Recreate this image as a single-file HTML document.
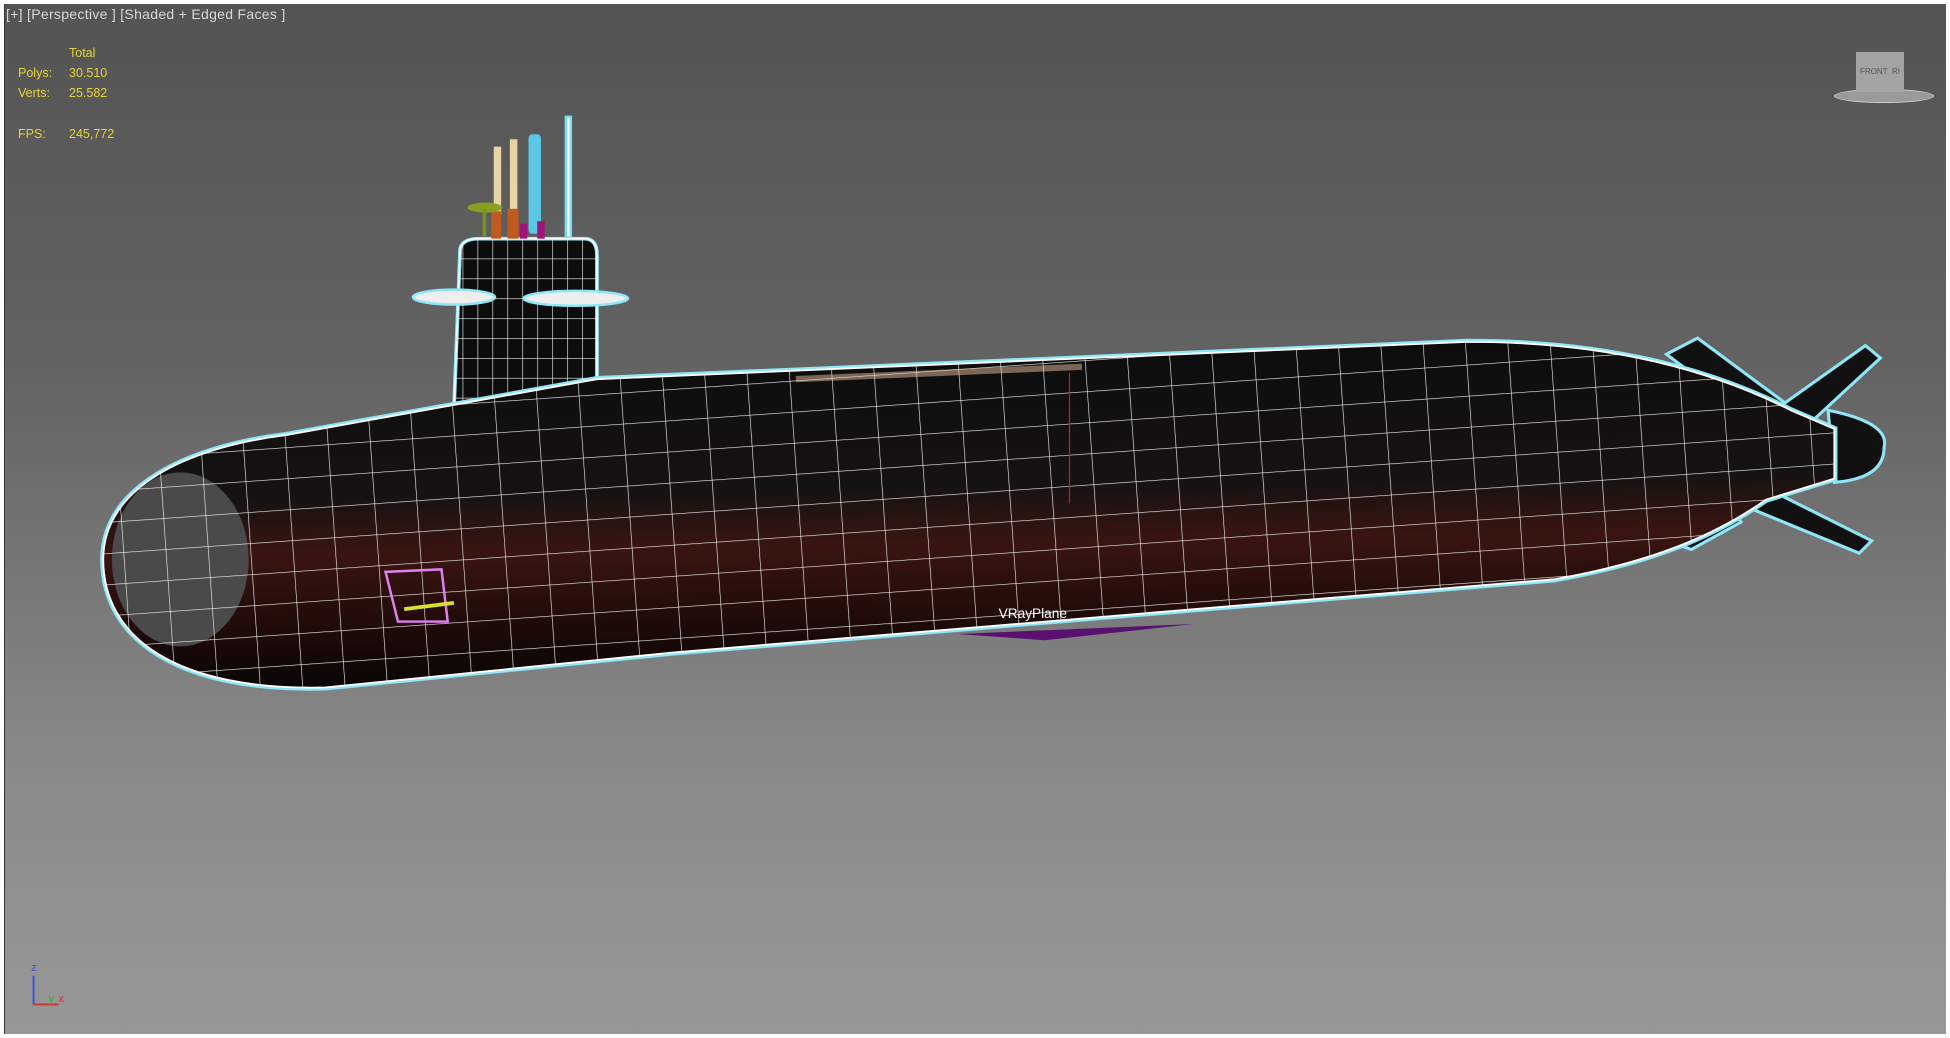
<!DOCTYPE html>
<html><head><meta charset="utf-8"><style>
html,body{margin:0;padding:0;width:1950px;height:1038px;overflow:hidden;background:#fff}
.vp{position:absolute;left:4px;top:4px;width:1941px;height:1030px;background:linear-gradient(#545454 0%,#636363 35%,#8a8a8a 75%,#979797 100%);border-left:1px solid #333}
.t{position:absolute;font-family:"Liberation Sans",sans-serif;font-size:14px;letter-spacing:0.3px;color:#d8d8d8}
.y{position:absolute;font-family:"Liberation Sans",sans-serif;font-size:12.5px;color:#e6d23a}
svg{position:absolute;left:0;top:0}
</style></head><body>
<div class="vp"></div>
<div class="t" style="left:6px;top:6px">[+] [Perspective ] [Shaded + Edged Faces ]</div>
<div class="y" style="left:69px;top:46px">Total</div>
<div class="y" style="left:18px;top:66px">Polys:</div><div class="y" style="left:69px;top:66px">30.510</div>
<div class="y" style="left:18px;top:86px">Verts:</div><div class="y" style="left:69px;top:86px">25.582</div>
<div class="y" style="left:18px;top:127px">FPS:</div><div class="y" style="left:69px;top:127px">245,772</div>
<svg width="1950" height="1038" viewBox="0 0 1568 835" preserveAspectRatio="none">
<defs>
<linearGradient id="hg" x1="0" y1="0" x2="0.08" y2="1">
<stop offset="0" stop-color="#0c0c0c"/><stop offset="0.45" stop-color="#151212"/><stop offset="0.62" stop-color="#3a1510"/><stop offset="0.85" stop-color="#1c0a08"/><stop offset="1" stop-color="#0a0605"/></linearGradient>
<pattern id="wf" width="34" height="25" patternUnits="userSpaceOnUse" patternTransform="rotate(-4)">
<path d="M0 0H34M0 0V25" stroke="#f2f2f2" stroke-width="1" fill="none"/></pattern>
<pattern id="wf2" width="12" height="16" patternUnits="userSpaceOnUse">
<path d="M0 0H12M0 0V16" stroke="#f2f2f2" stroke-width="1" fill="none"/></pattern>
<clipPath id="hc"><path id="hp" d="M83,450 C83,392 150,360 230,350 L480,305 L1180,275 C1300,275 1380,300 1440,330 L1475,345 L1475,385 L1420,402 C1380,430 1330,452 1250,466 L540,525 L262,553 C140,556 83,512 83,450 Z"/></clipPath>
</defs>
<g stroke="#8ee6f7" stroke-width="2.5" fill="#111">
<path d="M1340,285 L1365,272 L1450,335 L1420,345 Z"/>
<path d="M1420,335 L1500,278 L1512,288 L1445,350 Z"/>
<path d="M1425,395 L1505,435 L1495,445 L1410,410 Z"/>
<path d="M1340,435 L1390,405 L1400,420 L1360,442 Z"/>
<path d="M1470,330 Q1520,340 1515,360 Q1515,385 1475,388 Z"/>
</g>
<path d="M370,200 Q372,192 385,192 L470,192 Q480,192 480,205 L480,310 L365,330 Z" fill="#0d0d0d" stroke="#8ee6f7" stroke-width="3"/>
<path d="M370,200 Q372,192 385,192 L470,192 Q480,192 480,205 L480,310 L365,330 Z" fill="url(#wf2)" stroke="#fff" stroke-width="1.2"/>
<ellipse cx="365" cy="239" rx="33" ry="6" fill="#eee" stroke="#8ee6f7" stroke-width="2"/>
<ellipse cx="463" cy="240" rx="42" ry="6" fill="#eee" stroke="#8ee6f7" stroke-width="2"/>
<rect x="454" y="93" width="6" height="98" fill="#6fe0f5"/><rect x="456" y="95" width="2" height="95" fill="#fff"/>
<rect x="425" y="108" width="10" height="80" fill="#5bc6e6" rx="3"/>
<rect x="397" y="118" width="6" height="55" fill="#e8d5a5"/><rect x="395" y="170" width="8" height="22" fill="#c05a20"/>
<rect x="410" y="112" width="6" height="58" fill="#e8d5a5"/><rect x="408" y="168" width="9" height="24" fill="#c05a20"/>
<ellipse cx="390" cy="167" rx="14" ry="4" fill="#8aa020"/><rect x="388" y="168" width="3" height="22" fill="#7a9020"/>
<rect x="418" y="180" width="6" height="12" fill="#a0147a"/><rect x="432" y="178" width="6" height="14" fill="#a0147a"/>
<use href="#hp" fill="none" stroke="#8ee6f7" stroke-width="5"/>
<use href="#hp" fill="url(#hg)"/>
<g clip-path="url(#hc)">
<ellipse cx="145" cy="450" rx="55" ry="70" fill="#4a4a4a"/>
<rect x="60" y="250" width="1450" height="330" fill="url(#wf)"/>
<path d="M640,305 L870,295" stroke="#e8c0a0" stroke-width="5" opacity=".5"/>
</g>
<use href="#hp" fill="none" stroke="#fff" stroke-width="1.5"/>
<path d="M310,460 L355,458 L360,500 L320,500 Z" fill="none" stroke="#e080f0" stroke-width="2"/>
<path d="M325,490 L365,485" stroke="#d8e030" stroke-width="3"/>
<line x1="860" y1="300" x2="860" y2="405" stroke="#c02020"/>
<path d="M770,510 L960,502 L840,515 Z" fill="#5a1070"/>
<text x="803" y="497" font-family="Liberation Sans,sans-serif" font-size="11" fill="#fff">VRayPlane</text>
<line x1="27" y1="785" x2="27" y2="808" stroke="#3050e0" stroke-width="1.5"/>
<line x1="27" y1="808" x2="47" y2="808" stroke="#d03030" stroke-width="1.5"/>
<text x="25" y="781" font-family="Liberation Sans,sans-serif" font-size="9" fill="#3050e0">z</text>
<text x="39" y="806" font-family="Liberation Sans,sans-serif" font-size="9" fill="#30b040">y</text>
<text x="47" y="806" font-family="Liberation Sans,sans-serif" font-size="9" fill="#d03030">x</text>
</svg>
<div style="position:absolute;left:1834px;top:89px;width:98px;height:12px;border-radius:50%;background:#9a9a9a;border:1px solid #ccc"></div>
<div style="position:absolute;left:1856px;top:52px;width:48px;height:40px;background:#a4a4a4;font:8px 'Liberation Sans',sans-serif;color:#555;line-height:40px;padding-left:4px;box-sizing:border-box">FRONT&nbsp;&nbsp;RI</div>
</body></html>
